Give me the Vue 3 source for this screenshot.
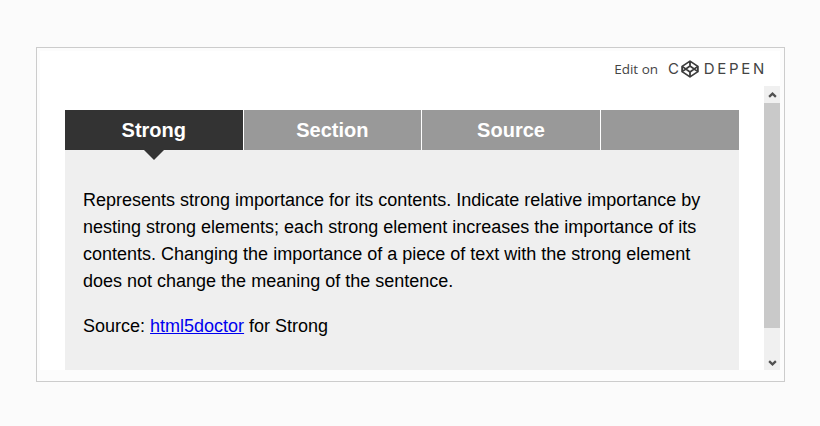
<template>
  <div class="page">
    <div class="frame">
      <div class="inner">
        <header class="topbar">
          <span class="edit-on">Edit on</span>
          <span class="brand">
            <span class="brand-c">C</span>
            <svg class="cube" viewBox="0 0 24 24" fill="none" stroke="#3c3c3c" stroke-width="2.400" stroke-linejoin="round">
              <path d="M12 1.500 22.500 8.500v7L12 22.500 1.500 15.500v-7z" />
              <path d="M12 1.500v6.500M12 16v6.500M1.500 8.500 12 16l10.500-7.500M1.500 15.500 12 8l10.500 7.500" />
            </svg>
            <span>DEPEN</span>
          </span>
        </header>

        <div class="viewport">
          <main class="content">
            <nav class="tabs">
              <a
                v-for="tab in tabs"
                :key="tab.label"
                class="tab"
                :class="{ active: tab.active, spacer: !tab.label }"
              >{{ tab.label }}</a>
            </nav>
            <section class="panel">
              <p>Represents strong importance for its contents. Indicate relative importance by nesting strong elements; each strong element increases the importance of its contents. Changing the importance of a piece of text with the strong element does not change the meaning of the sentence.</p>
              <p>Source: <a href="#" class="link">html5doctor</a> for Strong</p>
            </section>
          </main>

          <div class="scrollbar">
            <div class="arrow">
              <svg viewBox="0 0 8 5" width="9" height="6"><path d="M1 4.200 4 1.300 7 4.200" fill="none" stroke="#505050" stroke-width="2" /></svg>
            </div>
            <div class="track"><div class="thumb" /></div>
            <div class="arrow down">
              <svg viewBox="0 0 8 5" width="9" height="6"><path d="M1 .8 4 3.700 7 .8" fill="none" stroke="#505050" stroke-width="2" /></svg>
            </div>
          </div>
        </div>
      </div>
    </div>
  </div>
</template>

<script setup>
const tabs = [
  { label: 'Strong', active: true },
  { label: 'Section' },
  { label: 'Source' },
  { label: '' }
]
</script>

<style>
html,
body {
  margin: 0;
  background: #fbfbfb;
}
</style>

<style scoped>
.page {
  width: 820px;
  height: 426px;
  padding: 47px 0 0 36px;
  box-sizing: border-box;
  overflow: hidden;
}

.frame {
  width: 749px;
  height: 335px;
  box-sizing: border-box;
  border: 1px solid #ccc;
  padding: 3px 4px 11px 3px;
  background: #fcfcfc;
}

.inner {
  height: 100%;
  display: flex;
  flex-direction: column;
  background: #fff;
}

.topbar {
  height: 35px;
  flex: none;
  display: flex;
  justify-content: flex-end;
  align-items: center;
  padding: 0 13px 0 0;
  box-sizing: border-box;
  color: #444;
}

.edit-on {
  font: 13.5px "Open Sans", sans-serif;
  margin-right: 10px;
  margin-top: 1px;
}

.brand {
  display: flex;
  align-items: center;
  font: 400 15px Inter, sans-serif;
  letter-spacing: 2.7px;
}

.brand-c {
  margin-right: -1px;
}

.cube {
  width: 18px;
  height: 18px;
  margin: 0 5px 0 0;
}

.viewport {
  flex: 1;
  min-height: 0;
  display: flex;
}

.content {
  width: 724px;
  flex: none;
  box-sizing: border-box;
  padding: 24px 25px 0;
  overflow: hidden;
}

.tabs {
  display: flex;
  height: 40px;
}

.tab {
  position: relative;
  width: 26.5%;
  flex: none;
  box-sizing: border-box;
  border-right: 1px solid #fff;
  background: #999;
  color: #fff;
  font: bold 20px/40px "Liberation Sans", Arial, sans-serif;
  text-align: center;
}

.tab.spacer {
  flex: 1;
  border-right: 0;
}

.tab.active {
  background: #333;
}

.tab.active::after {
  content: "";
  position: absolute;
  left: 50%;
  top: 100%;
  margin-left: -10px;
  border-style: solid;
  border-width: 10px 10px 0;
  border-color: #333 transparent transparent;
}

.panel {
  background: #efefef;
  padding: 37px 18px 36px;
  color: #000;
  font: 18px/27px "Liberation Sans", Arial, sans-serif;
}

.panel p {
  margin: 0 0 18px;
}

.panel p:last-child {
  margin-bottom: 0;
}

.link {
  color: #00e;
}

.scrollbar {
  width: 16px;
  flex: none;
  display: flex;
  flex-direction: column;
  background: #f0f0f0;
}

.arrow {
  height: 17px;
  flex: none;
  display: flex;
  align-items: center;
  justify-content: center;
}

.arrow.down {
  padding-top: 3px;
  box-sizing: border-box;
}

.track {
  flex: 1;
}

.thumb {
  height: 225px;
  background: #c9c9c9;
}
</style>
